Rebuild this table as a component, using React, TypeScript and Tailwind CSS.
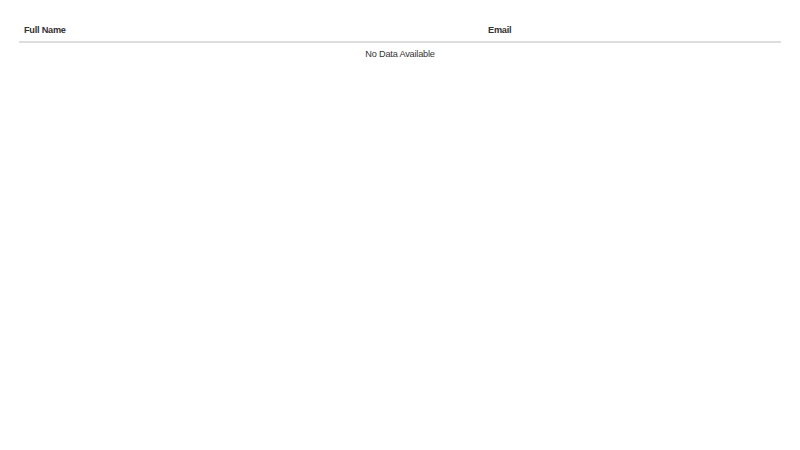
export default function App() {
  return (
    <div className="w-[800px] h-[450px] bg-white pt-[20px] px-[19px]" style={{ fontFamily: '"Liberation Sans", Arial, sans-serif' }}>
      <div className="w-[762px]">
        <div className="flex border-b-2 border-[#dddddd] h-[23px] items-center text-[9.2px] leading-[11px] tracking-[-0.25px] font-bold text-[#333333]">
          <div className="w-[464px] pl-[5px]">Full Name</div>
          <div className="flex-1 pl-[5px]">Email</div>
        </div>
        <div className="text-center text-[9.2px] leading-[11px] tracking-[-0.2px] text-[#333333] pt-[6px]">No Data Available</div>
      </div>
    </div>
  );
}
